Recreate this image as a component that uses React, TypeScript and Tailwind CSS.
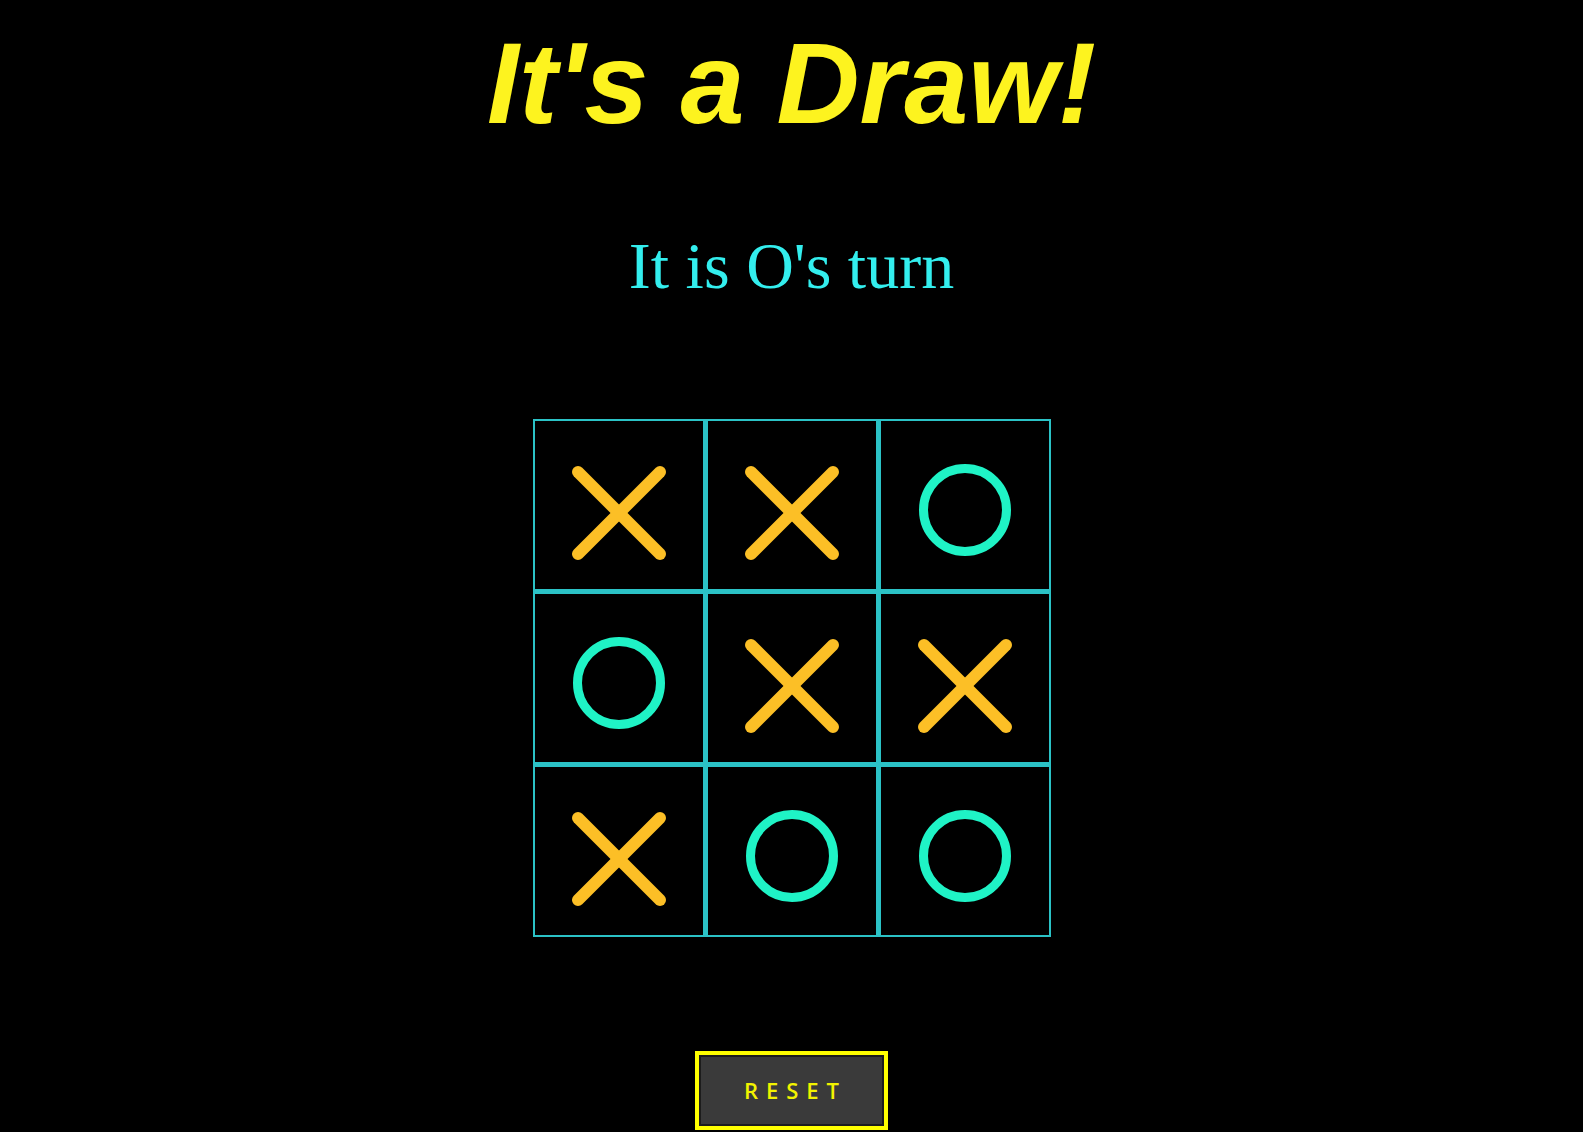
import React from "react";

type Mark = "X" | "O";

const board: Mark[] = ["X", "X", "O", "O", "X", "X", "X", "O", "O"];

function XMark() {
  return (
    <svg width="168" height="168" viewBox="0 0 168 168" className="block">
      <g stroke="#fcbf26" strokeWidth="12" strokeLinecap="round">
        <line x1="43" y1="51" x2="125" y2="133" />
        <line x1="125" y1="51" x2="43" y2="133" />
      </g>
    </svg>
  );
}

function OMark() {
  return (
    <svg width="168" height="168" viewBox="0 0 168 168" className="block">
      <circle cx="84" cy="89" r="41.5" fill="none" stroke="#1ff3c6" strokeWidth="9" />
    </svg>
  );
}

export default function App() {
  return (
    <div className="min-h-[1132px] w-full bg-black flex flex-col items-center">
      <h1
        className="mt-[26px] text-[115px] leading-none font-bold italic text-[#fdf31f]"
        style={{ fontFamily: '"Liberation Sans", Arial, sans-serif' }}
      >
        It's a Draw!
      </h1>
      <p
        className="mt-[92px] text-[66px] leading-none text-[#33eeee]"
        style={{ fontFamily: '"Liberation Serif", "Times New Roman", serif' }}
      >
        It is O's turn
      </p>
      <div className="mt-[120px] grid grid-cols-3 gap-px bg-[#2bc2c6]">
        {board.map((m, i) => (
          <div key={i} className="w-[172px] h-[172px] border-2 border-[#2bc2c6] bg-black">
            {m === "X" ? <XMark /> : <OMark />}
          </div>
        ))}
      </div>
      <button
        className="mt-[114px] w-[193px] h-[79px] border-4 border-[#ffff00] bg-[#3a3a3a] shadow-[inset_0_0_0_2px_#1c1c1c] text-[#f2f200] text-[22px] font-semibold tracking-[0.36em] pl-[0.36em] flex items-center justify-center"
        style={{ fontFamily: '"Open Sans", "Noto Sans", sans-serif' }}
      >
        RESET
      </button>
    </div>
  );
}
